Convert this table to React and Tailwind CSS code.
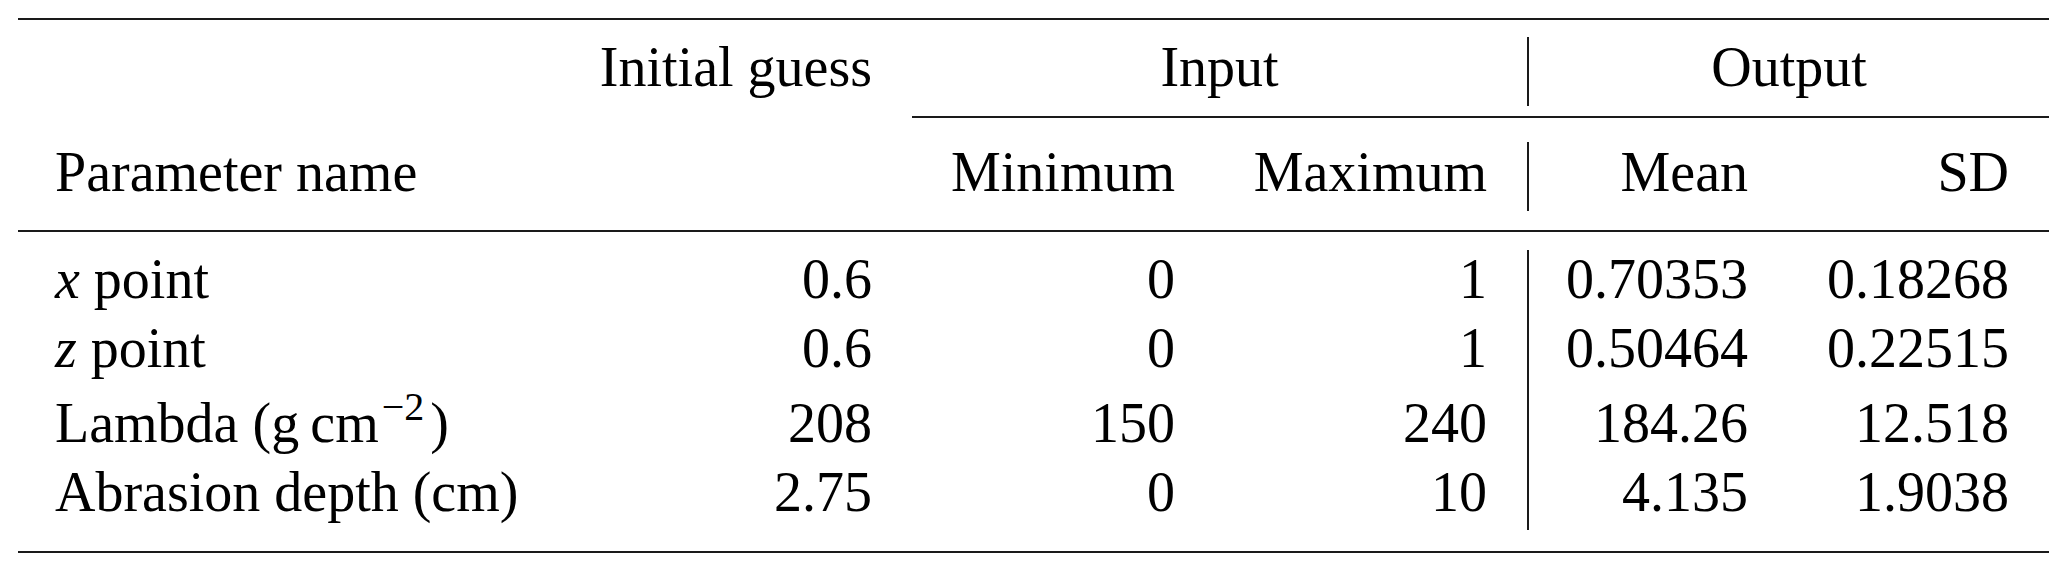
import React from "react";

const GRID = "grid grid-cols-[544px_350px_303px_312px_2px_259px_261px]";
const RULE = "bg-[#1a1a1a]";

const rows = [
  { name: <><i>x</i> point</>, v: ["0.6", "0", "1", "0.70353", "0.18268"] },
  { name: <><i>z</i> point</>, v: ["0.6", "0", "1", "0.50464", "0.22515"] },
  {
    name: (
      <>
        Lambda (g{"\u2009"}cm
        <span className="text-[40px] leading-[0] align-[22px] ml-[3px] mr-[6px]">−2</span>)
      </>
    ),
    v: ["208", "150", "240", "184.26", "12.518"],
  },
  { name: <>Abrasion depth (cm)</>, v: ["2.75", "0", "10", "4.135", "1.9038"] },
];

const rowCls = [
  "h-[82px] pt-[13px]",
  "h-[69px]",
  "h-[75px] pt-[6px]",
  "h-[93px] pb-[24px]",
];

export default function App() {
  return (
    <div
      className="bg-white w-[2067px] h-[570px] pt-[18px] pl-[18px] text-black text-[56px]"
      style={{ fontFamily: '"Liberation Serif", "Times New Roman", serif' }}
    >
      <div className="w-[2031px]">
        {/* top rule */}
        <div className={`h-[2px] ${RULE}`} />

        {/* header row 1 */}
        <div className={`${GRID} h-[96px] leading-[62px]`}>
          <div />
          <div className="pt-[16px] pr-[40px] text-right">Initial guess</div>
          <div className="col-span-2 pt-[16px] text-center">Input</div>
          <div className={`mt-[17px] h-[69px] ${RULE}`} />
          <div className="col-span-2 pt-[16px] text-center">Output</div>
        </div>

        {/* partial rule */}
        <div className={`${GRID} h-[2px]`}>
          <div className={`col-start-3 col-span-5 ${RULE}`} />
        </div>

        {/* header row 2 */}
        <div className={`${GRID} h-[112px] leading-[62px]`}>
          <div className="pt-[23px] pl-[37px]">Parameter name</div>
          <div />
          <div className="pt-[23px] pr-[40px] text-right">Minimum</div>
          <div className="pt-[23px] pr-[40px] text-right">Maximum</div>
          <div className={`mt-[24px] h-[69px] ${RULE}`} />
          <div className="pt-[23px] pr-[40px] text-right">Mean</div>
          <div className="pt-[23px] pr-[40px] text-right">SD</div>
        </div>

        {/* mid rule */}
        <div className={`h-[2px] ${RULE}`} />

        {/* body */}
        <div className={`${GRID} leading-[69px]`}>
          <div className={`col-start-5 row-start-1 row-span-4 mt-[18px] mb-[21px] ${RULE}`} />
          {rows.map((r, i) => (
            <React.Fragment key={i}>
              <div className={`${rowCls[i]} pl-[37px] whitespace-nowrap`}>{r.name}</div>
              <div className={`${rowCls[i]} pr-[40px] text-right`}>{r.v[0]}</div>
              <div className={`${rowCls[i]} pr-[40px] text-right`}>{r.v[1]}</div>
              <div className={`${rowCls[i]} pr-[40px] text-right`}>{r.v[2]}</div>
              <div className={`${rowCls[i]} pr-[40px] text-right`}>{r.v[3]}</div>
              <div className={`${rowCls[i]} pr-[40px] text-right`}>{r.v[4]}</div>
            </React.Fragment>
          ))}
        </div>

        {/* bottom rule */}
        <div className={`h-[2px] ${RULE}`} />
      </div>
    </div>
  );
}
